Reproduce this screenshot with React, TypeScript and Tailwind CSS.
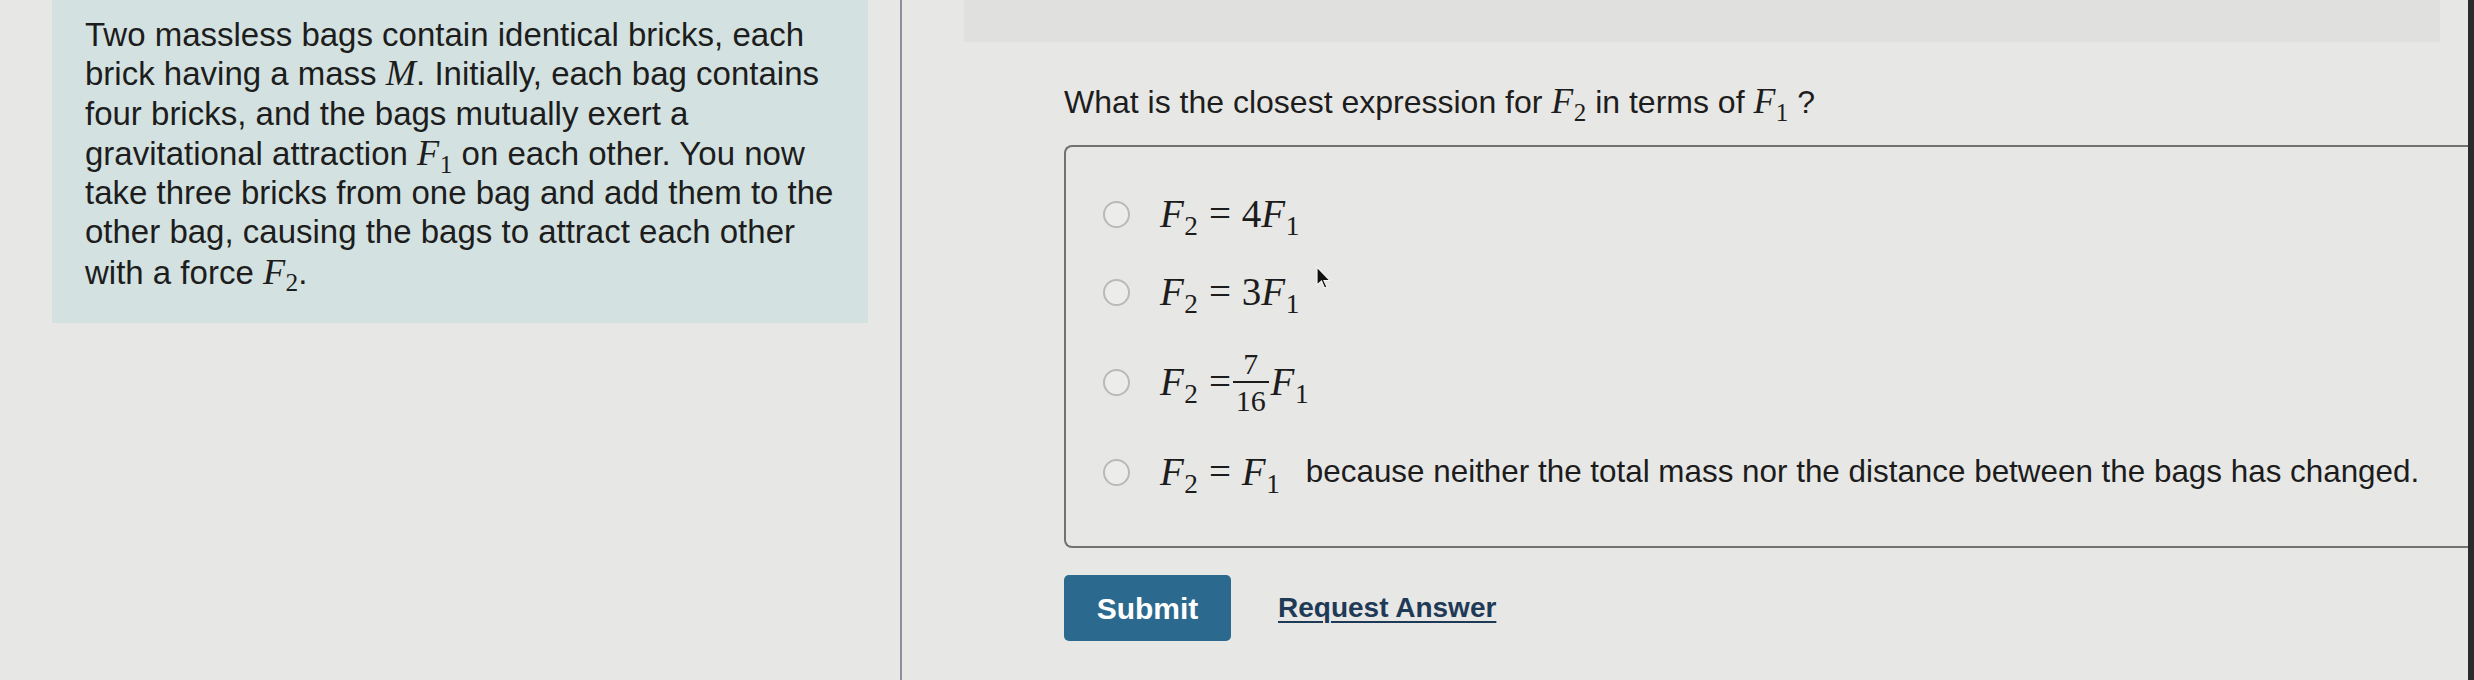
import React from "react";

const serif = "font-['Liberation_Serif',serif]";

// italic variable with upright subscript
const V = ({ v, sub }: { v: string; sub?: string }) => (
  <span className={`${serif} italic`}>
    {v}
    {sub && (
      <span className="relative top-[0.3em] ml-[0.02em] text-[0.7em] leading-none not-italic">{sub}</span>
    )}
  </span>
);

const Eq = () => <span className={`${serif} mx-[0.28em]`}>=</span>;

const Radio = () => (
  <span className="h-[27px] w-[27px] shrink-0 rounded-full border-2 border-[#b9b9b7] bg-[#ececea]" />
);

const Option = ({ children, tall }: { children: React.ReactNode; tall?: boolean }) => (
  <label className={`flex items-center gap-[30px] ${tall ? "h-[74px]" : "h-[50px]"}`}>
    <Radio />
    <span className="flex items-center text-[31.4px] text-[#1c1c1c]">{children}</span>
  </label>
);

export default function App() {
  return (
    <div className="relative flex h-[680px] w-[2474px] overflow-hidden bg-[#e7e7e5] font-['Liberation_Sans',Arial,sans-serif] text-[#1d1d1d]">
      {/* problem statement */}
      <div className="w-[900px] shrink-0 pl-[52px]">
        <div className="h-[323px] w-[816px] bg-[#d3e2e0] pl-[33px] pr-[22px] pt-[15px]">
          <p className="text-[33px] leading-[39.3px]">
            Two massless bags contain identical bricks, each brick having a mass{" "}
            <span className={`${serif} italic text-[1.1em]`}>M</span>. Initially, each bag contains four
            bricks, and the bags mutually exert a gravitational attraction{" "}
            <span className="text-[1.1em]">
              <V v="F" sub="1" />
            </span>{" "}
            on each other. You now take three bricks from one bag and add them to the other bag, causing
            the bags to attract each other with a force{" "}
            <span className="text-[1.1em]">
              <V v="F" sub="2" />
            </span>
            .
          </p>
        </div>
      </div>

      <div className="w-[2px] shrink-0 bg-[#8b8f9b]" />

      {/* question */}
      <div className="flex flex-1 flex-col">
        <div className="ml-[62px] mr-[28px] h-[42px] bg-[#e0e0de]" />
        <div className="pl-[162px]">
          <p className="mt-[39px] text-[32px] leading-[40px]">
            What is the closest expression for{" "}
            <span className="text-[1.12em]">
              <V v="F" sub="2" />
            </span>{" "}
            in terms of{" "}
            <span className="text-[1.12em]">
              <V v="F" sub="1" />
            </span>{" "}
            ?
          </p>

          <div className="mt-[23px] flex flex-col gap-[28px] rounded-l-[8px] border-y-2 border-l-2 border-[#727272] pb-[49px] pl-[37px] pt-[42px]">
            <Option>
              <span className="text-[39px]">
                <V v="F" sub="2" />
                <Eq />
                <span className={serif}>4</span>
                <V v="F" sub="1" />
              </span>
            </Option>
            <Option>
              <span className="text-[39px]">
                <V v="F" sub="2" />
                <Eq />
                <span className={serif}>3</span>
                <V v="F" sub="1" />
              </span>
            </Option>
            <Option tall>
              <span className="flex items-center text-[39px]">
                <V v="F" sub="2" />
                <span className={`${serif} ml-[0.28em]`}>=</span>
                <span className={`${serif} mx-[0.06em] inline-flex flex-col items-center text-[30px] leading-[35px]`}>
                  <span className="px-[3px]">7</span>
                  <span className="h-[2px] w-full bg-[#1c1c1c]" />
                  <span className="px-[3px]">16</span>
                </span>
                <V v="F" sub="1" />
              </span>
            </Option>
            <Option>
              <span className="text-[39px]">
                <V v="F" sub="2" />
                <Eq />
                <V v="F" sub="1" />
              </span>
              <span className="ml-[26px]">
                because neither the total mass nor the distance between the bags has changed.
              </span>
            </Option>
          </div>

          <div className="mt-[27px] flex items-center gap-[47px]">
            <button className="h-[66px] w-[167px] rounded-[5px] bg-[#2b6a8e] text-[30px] font-bold text-white">
              Submit
            </button>
            <a className="text-[28px] font-bold text-[#1f3a56] underline decoration-2 underline-offset-4">
              Request Answer
            </a>
          </div>
        </div>
      </div>

      <div className="w-[6px] shrink-0 bg-[#2a2a2a]" />

      {/* mouse pointer */}
      <svg className="absolute left-[1316px] top-[266px]" width="16" height="24" viewBox="0 0 16 24">
        <path d="M1 1 L1 19 L5.5 15 L8.5 22 L11 21 L8 14.5 L14 14.5 Z" fill="#111" stroke="#f4f4f4" strokeWidth="1.2" />
      </svg>
    </div>
  );
}
